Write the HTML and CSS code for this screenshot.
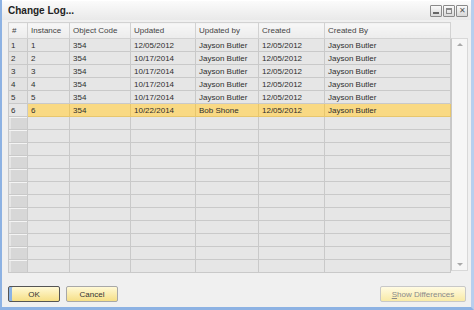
FILE: index.html
```html
<!DOCTYPE html>
<html lang="en">

<head>
    <meta charset="UTF-8">
    <title>Change Log...</title>
    <link rel="stylesheet" href="styles.css">
</head>

<body>
    <main class="window">
        <div class="titlebar">
            <span class="title">Change Log...</span>
            <div class="controls">
                <span class="ctl ctl_min"></span>
                <span class="ctl ctl_max"></span>
                <span class="ctl ctl_close">&#x2715;</span>
            </div>
        </div>
        <div class="content">
            <div class="grid">
                <table class="log">
                    <colgroup>
                        <col style="width: 19px">
                        <col style="width: 42px">
                        <col style="width: 61px">
                        <col style="width: 65px">
                        <col style="width: 63px">
                        <col style="width: 66px">
                        <col style="width: 126px">
                    </colgroup>
                    <thead>
                        <tr>
                            <th>#</th>
                            <th>Instance</th>
                            <th>Object Code</th>
                            <th>Updated</th>
                            <th>Updated by</th>
                            <th>Created</th>
                            <th>Created By</th>
                        </tr>
                    </thead>
                    <tbody id="rows"></tbody>
                </table>
                <div class="scroll">
                    <div class="scroll_head"></div>
                    <div class="scroll_track">
                        <span class="arrow up"></span>
                        <span class="arrow down"></span>
                    </div>
                </div>
            </div>
            <div class="footer">
                <button class="btn btn_default">OK</button>
                <button class="btn">Cancel</button>
                <span class="spacer"></span>
                <button class="btn btn_wide" disabled><u>S</u>how Differences</button>
            </div>
        </div>
    </main>
    <script>
        const data = [
            [1, 1, 354, "12/05/2012", "Jayson Butler", "12/05/2012", "Jayson Butler"],
            [2, 2, 354, "10/17/2014", "Jayson Butler", "12/05/2012", "Jayson Butler"],
            [3, 3, 354, "10/17/2014", "Jayson Butler", "12/05/2012", "Jayson Butler"],
            [4, 4, 354, "10/17/2014", "Jayson Butler", "12/05/2012", "Jayson Butler"],
            [5, 5, 354, "10/17/2014", "Jayson Butler", "12/05/2012", "Jayson Butler"],
            [6, 6, 354, "10/22/2014", "Bob Shone", "12/05/2012", "Jayson Butler"]
        ];
        let rows = document.getElementById("rows");
        let html = "";
        data.forEach((r, i) => {
            html += `<tr class="${i == data.length - 1 ? "selected" : ""}">`;
            r.forEach((v, j) => html += `<td class="${j == 0 ? "rownum" : ""}">${v}</td>`);
            html += "</tr>";
        });
        for (let i = 0; i < 12; i++) { // empty rows to fill the grid
            html += `<tr class="empty"><td class="rownum"></td><td></td><td></td><td></td><td></td><td></td><td></td></tr>`;
        }
        rows.innerHTML = html;
    </script>
</body>

</html>
```

FILE: styles.css
```css
html, body {
    margin: 0;
    padding: 0;
}

body {
    width: 474px;
    height: 310px;
    overflow: hidden;
    font-family: "Liberation Sans", Arial, sans-serif;
    font-size: 8px;
    color: #2e2e2e;
}

.window {
    box-sizing: border-box;
    width: 474px;
    height: 310px;
    display: flex;
    flex-direction: column;
    background-color: #f0f0f0;
    border-left: 2px solid #8db2e3;
    border-right: 3px solid #b7cfee;
    border-bottom: 3px solid #8db2e3;
}

.titlebar {
    height: 20px;
    display: flex;
    align-items: center;
    padding: 0 3px 0 6px;
    background: linear-gradient(#fbfbfb, #e9e9e9);
    border-top: 1px solid #fff;
    box-sizing: border-box;
}

.title {
    flex: 1;
    font-size: 10px;
    font-weight: bold;
    color: #222;
}

.controls {
    display: flex;
    gap: 1px;
}

.ctl {
    width: 10px;
    height: 10px;
    border: 1px solid #8a8a8a;
    border-radius: 1px;
    background: linear-gradient(#fafafa, #d8d8d8);
    position: relative;
    font-size: 8px;
    line-height: 10px;
    text-align: center;
    color: #555;
}

.ctl_min::after {
    content: "";
    position: absolute;
    left: 2px;
    right: 2px;
    bottom: 2px;
    height: 2px;
    background: #666;
}

.ctl_max::after {
    content: "";
    position: absolute;
    left: 2px;
    right: 2px;
    top: 2px;
    bottom: 2px;
    border: 1px solid #888;
    border-top-width: 2px;
    box-sizing: border-box;
}

.content {
    flex: 1;
    display: flex;
    flex-direction: column;
    padding: 2px 3px 0 6px;
}

.grid {
    display: flex;
    height: 249px;
}

.log {
    border-collapse: collapse;
    table-layout: fixed;
    width: 442px;
    height: 249px;
    background-color: #e6e6e6;
}

.log th {
    height: 15px;
    text-align: left;
    font-weight: normal;
    color: #444;
    padding: 0 0 0 3px;
    background: linear-gradient(#f7f7f7, #ececec);
    border: 1px solid #d2d2d2;
}

.log td {
    height: 12px;
    padding: 0 0 0 3px;
    border: 1px solid #c9c9c9;
    white-space: nowrap;
    overflow: hidden;
    line-height: 11px;
}

.log td.rownum {
    background-color: #e2e2e2;
    padding-left: 2px;
}

.log tr.selected td {
    background-color: #f9d983;
    border-color: #e7c66d;
}

.log tr.selected td.rownum {
    background-color: #e6e6e6;
    border-color: #c9c9c9;
}

.log tr.empty td.rownum {
    background: linear-gradient(90deg, #f2f2f2 1px, #d7d7d7 1px);
    box-shadow: inset 0 1px #f4f4f4;
}

.scroll {
    width: 18px;
    display: flex;
    flex-direction: column;
}

.scroll_head {
    height: 16px;
}

.scroll_track {
    flex: 1;
    display: flex;
    flex-direction: column;
    justify-content: space-between;
    align-items: center;
    padding: 4px 0;
    background-color: #f6f6f6;
    border: 1px solid #d8d8d8;
    border-left-color: #c8c8c8;
}

.arrow {
    width: 0;
    height: 0;
    border-left: 3px solid transparent;
    border-right: 3px solid transparent;
}

.arrow.up {
    border-bottom: 3px solid #a9a9a9;
}

.arrow.down {
    border-top: 3px solid #a9a9a9;
}

.footer {
    display: flex;
    align-items: center;
    gap: 6px;
    margin-top: 15px;
    padding-right: 2px;
}

.spacer {
    flex: 1;
}

.btn {
    width: 52px;
    height: 16px;
    padding: 0;
    font-family: "Liberation Sans", Arial, sans-serif;
    font-size: 8px;
    color: #333;
    border: 1px solid #a8a8a8;
    border-radius: 2px;
    background: linear-gradient(#fff9d6, #f6df86);
}

.btn_default {
    border-color: #555;
    box-shadow: inset 3px 0 #8ab3e6;
}

.btn_wide {
    width: 86px;
    color: #8a8a8a;
    border-color: #c8c8c8;
    background: linear-gradient(#fffbe3, #f8eaa6);
}
```
